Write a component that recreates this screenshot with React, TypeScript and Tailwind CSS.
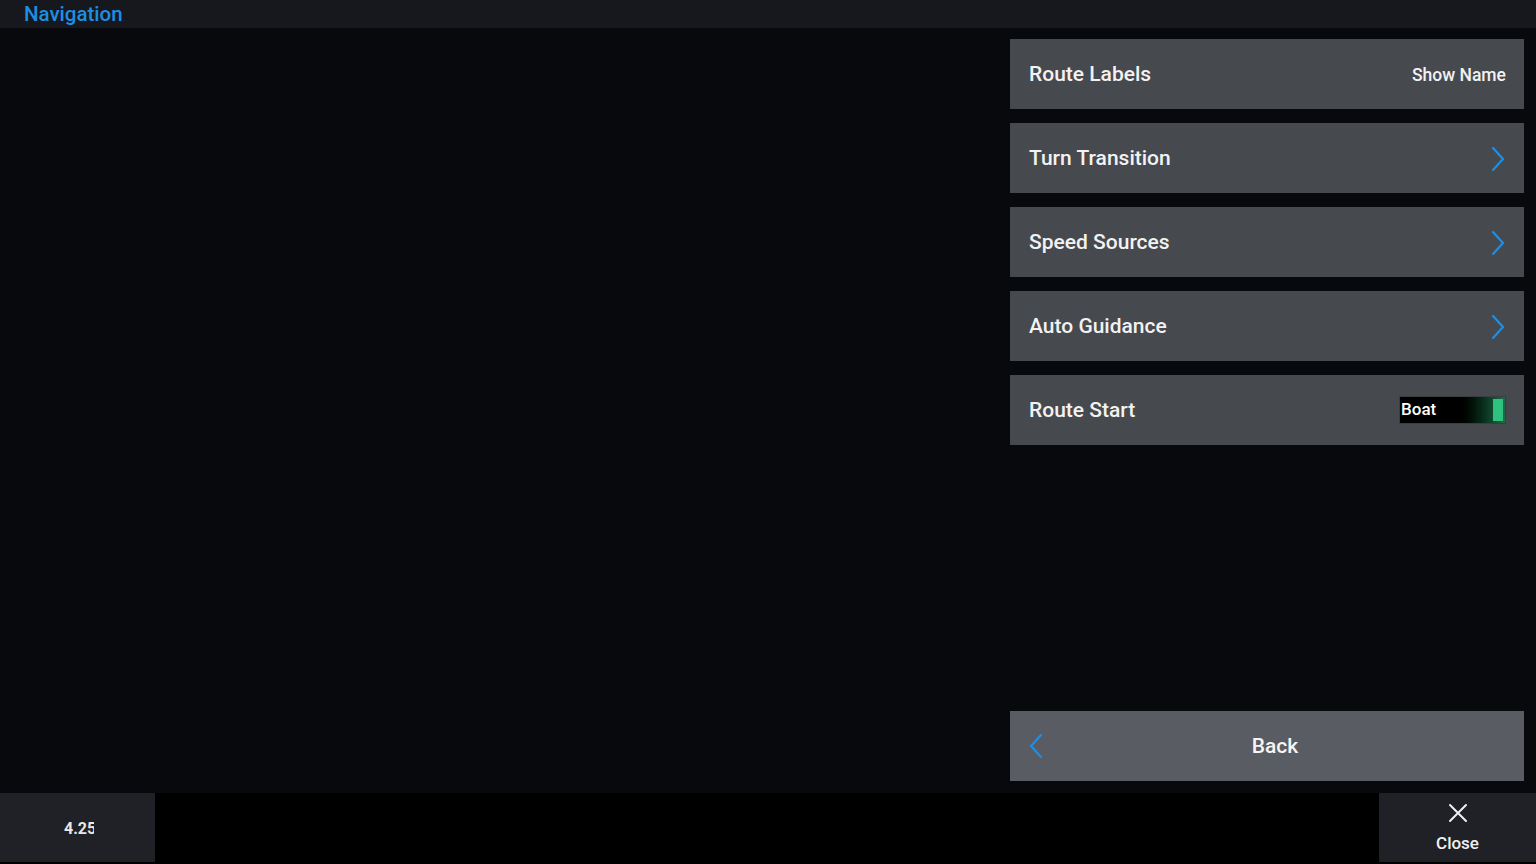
import React from "react";

function Chevron({ dir = "right" }: { dir?: "left" | "right" }) {
  return (
    <svg width="16" height="26" viewBox="0 0 16 26" fill="none">
      <path
        d={dir === "right" ? "M3 2 L13 13 L3 24" : "M13 2 L3 13 L13 24"}
        stroke="#1e8fe6"
        strokeWidth="2.2"
        strokeLinecap="round"
        strokeLinejoin="round"
      />
    </svg>
  );
}

function Row({ label, children }: { label: string; children?: React.ReactNode }) {
  return (
    <div className="h-[70px] bg-[#46494e] flex items-center justify-between pl-[19px] pr-[18px] pt-[2px]">
      <span className="text-[21px] font-medium text-[#f2f2f2]">{label}</span>
      {children}
    </div>
  );
}

export default function App() {
  return (
    <div className="w-[1536px] h-[864px] bg-[#07090d] flex flex-col overflow-hidden" style={{ fontFamily: "Roboto, 'Liberation Sans', sans-serif" }}>
      {/* title bar */}
      <div className="h-[28px] bg-[#16181d] flex items-center pl-[24px] shrink-0">
        <span className="text-[20.5px] font-medium text-[#1c8fe4] leading-none">Navigation</span>
      </div>

      {/* main */}
      <div className="flex-1 flex">
        <div className="flex-1" />
        <div className="w-[514px] mr-[12px] pt-[11px] pb-[12px] flex flex-col">
          <div className="flex flex-col gap-[14px]">
            <Row label="Route Labels">
              <span className="text-[17.5px] font-medium text-[#f2f2f2]">Show Name</span>
            </Row>
            <Row label="Turn Transition">
              <Chevron />
            </Row>
            <Row label="Speed Sources">
              <Chevron />
            </Row>
            <Row label="Auto Guidance">
              <Chevron />
            </Row>
            <Row label="Route Start">
              <div className="w-[107px] h-[28px] bg-black border border-[#3a3d42] flex items-center relative -mt-[2px]">
                <div className="absolute inset-y-0 right-0 w-[50px] bg-gradient-to-r from-black to-[#1f6e48]" />
                <span className="relative text-[17px] font-medium text-white pl-[1px]">Boat</span>
                <div className="absolute right-[2px] top-[2px] bottom-[2px] w-[10px] bg-[#2ec27e]" />
              </div>
            </Row>
          </div>
          <div className="flex-1" />
          <div className="h-[70px] bg-[#5a5c63] flex items-center relative pl-[16px] pt-[2px]">
            <div className="absolute left-[18px] top-1/2 -translate-y-1/2">
              <Chevron dir="left" />
            </div>
            <span className="flex-1 text-center text-[21px] font-medium text-[#f5f5f5]">Back</span>
          </div>
        </div>
      </div>

      {/* bottom bar */}
      <div className="h-[71px] bg-black flex justify-between shrink-0">
        <div className="w-[155px] h-[69px] bg-[#1f2127] flex items-center justify-center pt-[2px]">
          <div className="w-[30px] overflow-hidden ml-[3px]">
            <span className="text-[16px] font-bold text-[#e8e8e8] whitespace-nowrap">4.25</span>
          </div>
        </div>
        <div className="w-[157px] h-[69px] bg-[#1f2127] flex flex-col items-center pt-[10px]">
          <svg width="20" height="20" viewBox="0 0 20 20">
            <path d="M2 2 L18 18 M18 2 L2 18" stroke="#f0f0f0" strokeWidth="2" strokeLinecap="round" />
          </svg>
          <span className="text-[17px] font-medium text-[#f0f0f0] mt-[12px] leading-none">Close</span>
        </div>
      </div>
    </div>
  );
}
